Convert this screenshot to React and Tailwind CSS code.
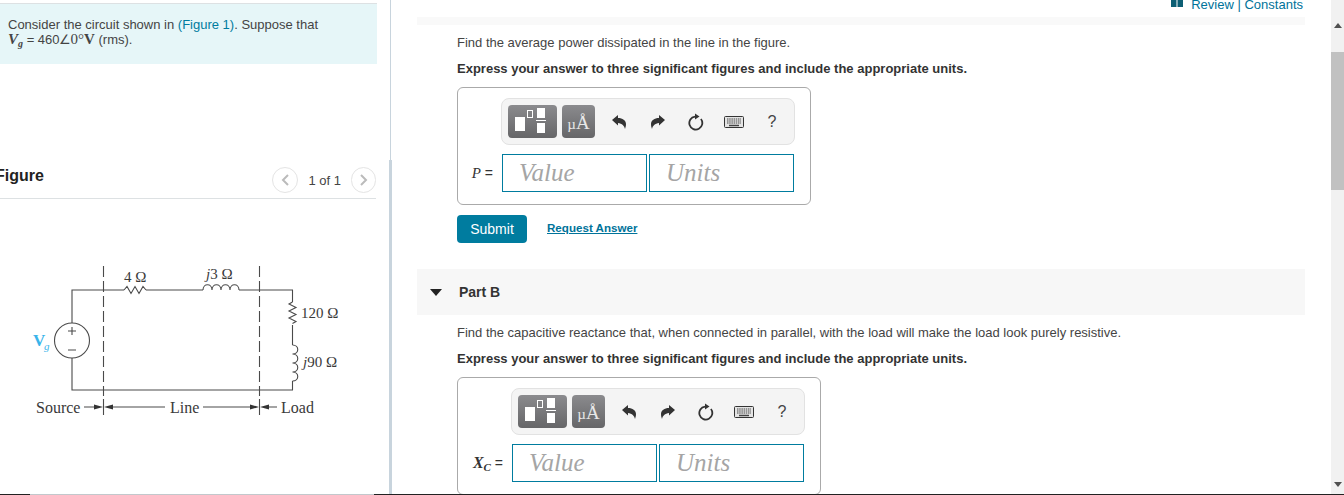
import React from "react";

const sans = { fontFamily: '"Liberation Sans", Arial, sans-serif' };
const serif = { fontFamily: '"Liberation Serif", serif' };

const UndoIcon = ({ flip }) => (
  <svg width="16" height="16" viewBox="0 0 16 16" className={flip ? "-scale-x-100" : ""}>
    <path d="M1 6 7 1v3c4.500 0 8 2.500 8 6 0 2-.5 3.500-1 5-.5-3-3-5.500-7-6v2.500z" fill="#333" />
  </svg>
);

const ResetIcon = () => (
  <svg width="18" height="18" viewBox="0 0 18 18">
    <path d="M13.900 6A6.500 6.500 0 1 1 8 3.600" fill="none" stroke="#333" strokeWidth="1.800" />
    <path d="M8 0.500 12.500 3.500 8 6.500z" fill="#333" />
  </svg>
);

const KeyboardIcon = () => (
  <svg width="20" height="12" viewBox="0 0 20 12">
    <rect x="0.500" y="0.500" width="19" height="11" rx="1" fill="#e4e4e4" stroke="#333" />
    <path d="M3 3h14M3 5h14M3 7h14" stroke="#444" strokeWidth="1" strokeDasharray="1.500 .7" />
    <path d="M5 9.500h10" stroke="#444" strokeWidth="1.500" />
  </svg>
);

const FractionIcon = () => (
  <svg width="31" height="25" viewBox="0 0 31 25">
    <rect x="0" y="9" width="10" height="14" fill="#fff" />
    <rect x="12.500" y="2.500" width="5" height="7" fill="none" stroke="#fff" strokeWidth="1" />
    <rect x="22" y="0" width="8" height="10" fill="#fff" />
    <rect x="21" y="12" width="10" height="1" fill="#fff" />
    <rect x="22" y="15" width="8" height="10" fill="#fff" />
  </svg>
);

const AnswerBox = ({ label, indent, labelWidth, width }) => (
  <div className={`border border-[#aaa] rounded-md ${width} h-[118px] pt-[10px]`}>
    <div className={`${indent} w-[294px] h-[47px] flex items-center bg-[#f4f4f4] border border-[#e2e2e2] rounded-lg pl-[6px]`}>
      <div className="w-[49px] h-[33px] flex items-start pl-[7px] pt-[3px] rounded bg-gradient-to-b from-[#8b8b8e] to-[#666668]">
        <FractionIcon />
      </div>
      <div
        className="ml-[5px] w-[33px] h-[33px] flex items-baseline justify-center pt-[6px] rounded bg-gradient-to-b from-[#8b8b8e] to-[#666668] text-[#e8e8e8] text-[15px] leading-[24px]"
        style={serif}
      >
        µ<span className="text-[19px]">Å</span>
      </div>
      <div className="ml-[14px] w-[20px] flex justify-center"><UndoIcon /></div>
      <div className="ml-[19px] w-[20px] flex justify-center"><UndoIcon flip /></div>
      <div className="ml-[18px] w-[20px] flex justify-center"><ResetIcon /></div>
      <div className="ml-[18px] w-[20px] flex justify-center"><KeyboardIcon /></div>
      <div className="ml-[18px] w-[20px] text-center text-[16px] text-[#444]">?</div>
    </div>
    <div className="flex items-center mt-[9px]">
      <div className={`${labelWidth} text-right pr-[9px] text-[#333] text-[14px] whitespace-nowrap`}>
        {label}
      </div>
      <div
        className="w-[145px] h-[38px] border border-[#007c9f] flex items-center pl-[16px] text-[25px] italic text-[#a5a5a5]"
        style={serif}
      >
        Value
      </div>
      <div
        className="ml-[2px] w-[145px] h-[38px] border border-[#007c9f] flex items-center pl-[16px] text-[25px] italic text-[#a5a5a5]"
        style={serif}
      >
        Units
      </div>
    </div>
  </div>
);

const Circuit = () => (
  <svg width="376" height="170" viewBox="0 260 376 170" className="block" style={serif}>
    <g fill="none" stroke="#4a4a4a" strokeWidth="1.100">
      <path d="M124 291H72V324M72 359V391H292.500V382M292.500 346V326M292.500 303V291H239M203 291H146" />
      <circle cx="72" cy="341.500" r="17.500" />
      <path d="M124 291l3-3.500 4 7 4-7 4 7 4-7 3 3.500" />
      <path d="M203 291c0-7 9-7 9 0c0-7 9-7 9 0c0-7 9-7 9 0c0-7 9-7 9 0" />
      <path d="M292.500 303l-3.500 2 7 3.500-7 3.500 7 3.500-7 3.500 7 3.500-3.500 2" />
      <path d="M292.500 346c7 0 7 9 0 9c7 0 7 9 0 9c7 0 7 9 0 9c7 0 7 9 0 9" />
      <path d="M103.500 267V397M259.500 267V397" strokeDasharray="11 4" />
      <path d="M103.500 400V416M259.500 400V416" />
      <path d="M84 408H96M112 408H165M203 408H252M267 408H277M68 332H76M72 328V336M68 351H76" />
    </g>
    <g fill="#333">
      <path d="M94 405.500 103 408 94 410.500zM113 405.500 104 408 113 410.500zM250 405.500 259 408 250 410.500zM269 405.500 260 408 269 410.500z" />
    </g>
    <g fill="#3a3a3a" fontSize="15">
      <text x="124" y="283">4 Ω</text>
      <text x="206" y="280"><tspan fontStyle="italic">j</tspan>3 Ω</text>
      <text x="301" y="319">120 Ω</text>
      <text x="303" y="368"><tspan fontStyle="italic">j</tspan>90 Ω</text>
    </g>
    <g fill="#3a3a3a" fontSize="16">
      <text x="36" y="414">Source</text>
      <text x="170" y="414">Line</text>
      <text x="281" y="414">Load</text>
    </g>
    <text x="33" y="347" fill="#3ab4ea" fontSize="17" fontWeight="bold">V</text>
    <text x="44" y="351" fill="#3ab4ea" fontSize="11" fontStyle="italic">g</text>
  </svg>
);

const App = () => {
  return (
    <div className="relative h-[495px] w-[1344px] overflow-hidden flex bg-white text-[#333] text-[13px]" style={sans}>
      {/* left column */}
      <div className="w-[390px] shrink-0 pt-[3px]">
        <div className="w-[377px] h-[61px] border-t border-[#dde1e3] bg-[#e6f6f8] pl-[8px] pt-[13px] leading-[15px] text-[#444]">
          <div>
            Consider the circuit shown in <span className="text-[#007c9f]">(Figure 1)</span>. Suppose that
          </div>
          <div className="whitespace-nowrap">
            <span className="italic font-bold text-[15px]" style={serif}>
              V<sub className="text-[10px]">g</sub>
            </span>{" "}
            = 460<span className="-ml-px">∠</span>
            <span className="text-[15px]" style={serif}>
              0°<b>V</b>
            </span>{" "}
            (rms).
          </div>
        </div>
        <div className="w-[376px] h-[40px] mt-[95px] border-b border-[#dde1e3] flex items-center">
          <span className="font-bold text-[16px] text-[#222] flex-1 -ml-[5px] -mt-[6px]">Figure</span>
          <div className="w-[26px] h-[26px] mt-[2px] rounded-full border border-[#e4e4e4] flex items-center justify-center mr-[10px]">
            <svg width="10" height="14" viewBox="0 0 10 14"><path d="M8 2 3 7l5 5" fill="none" stroke="#bbb" strokeWidth="2" /></svg>
          </div>
          <span className="text-[#444] mt-[4px] mr-[10px]">1 of 1</span>
          <div className="w-[25px] h-[26px] mt-[2px] rounded-full border border-[#e4e4e4] flex items-center justify-center">
            <svg width="10" height="14" viewBox="0 0 10 14"><path d="M2 2l5 5-5 5" fill="none" stroke="#bbb" strokeWidth="2" /></svg>
          </div>
        </div>
        <div className="mt-[60px]">
          <Circuit />
        </div>
      </div>

      {/* divider */}
      <div className="w-[1px] shrink-0 bg-[#c8d4dd] h-[160px]" />
      <div className="w-[3px] shrink-0 -ml-[2px] mt-[160px] bg-[#c8d4dd]" />

      {/* right column */}
      <div className="flex-1 min-w-0 pl-[25px]">
        <div className="w-[888px] h-[17px] relative">
          <div className="absolute right-[2px] -top-[5px] flex items-center text-[#00739a] whitespace-nowrap">
            <svg width="14" height="10" viewBox="0 0 14 10" className="mr-[7px] -mt-[2px]">
              <path d="M1 0h5.500v8H1zM7.500 0H13v8H7.500z" fill="#0d5f74" />
            </svg>
            Review | Constants
          </div>
        </div>
        <div className="w-[888px] h-[8px] bg-[#f9f9f9]" />
        <div className="pl-[40px]">
          <p className="mt-[10px] leading-[16px] text-[#444]">Find the average power dissipated in the line in the figure.</p>
          <p className="mt-[10px] leading-[16px] font-bold text-[#333]">Express your answer to three significant figures and include the appropriate units.</p>
          <div className="mt-[10px]">
            <AnswerBox label={<><i className="text-[15px]" style={serif}>P</i> =</>} indent="ml-[43px]" labelWidth="w-[44px]" width="w-[354px]" />
          </div>
          <div className="flex items-center mt-[10px]">
            <button className="w-[70px] h-[28px] rounded-sm bg-[#007c9f] text-white text-[14px]">Submit</button>
            <a className="ml-[20px] -mt-[2px] font-bold text-[11.6px] underline text-[#00739a]">Request Answer</a>
          </div>
        </div>
        <div className="w-[888px] h-[46px] mt-[26px] bg-[#f7f7f7] flex items-center">
          <span className="ml-[13px] w-0 h-0 border-l-[6px] border-r-[6px] border-t-[7px] border-l-transparent border-r-transparent border-t-[#222]" />
          <span className="ml-[17px] font-bold text-[14px] text-[#333]">Part B</span>
        </div>
        <div className="pl-[40px]">
          <p className="mt-[10px] leading-[16px] text-[#444]">
            Find the capacitive reactance that, when connected in parallel, with the load will make the load look purely resistive.
          </p>
          <p className="mt-[10px] leading-[16px] font-bold text-[#333]">Express your answer to three significant figures and include the appropriate units.</p>
          <div className="mt-[10px]">
            <AnswerBox
              label={<><i className="font-bold text-[16px]" style={serif}>X<sub className="text-[11px]">C</sub></i> =</>}
              indent="ml-[53px]"
              labelWidth="w-[54px]"
              width="w-[364px]"
            />
          </div>
        </div>
      </div>

      {/* scrollbar */}
      <div className="w-[13px] shrink-0 bg-[#f1f1f1] flex flex-col items-center justify-between relative">
        <span className="mt-[23px] w-0 h-0 border-l-[4px] border-r-[4px] border-b-[5px] border-l-transparent border-r-transparent border-b-[#505050]" />
        <div className="absolute top-[52px] left-0 right-0 h-[138px] bg-[#c1c1c1]" />
        <span className="mb-[8px] w-0 h-0 border-l-[4px] border-r-[4px] border-t-[5px] border-l-transparent border-r-transparent border-t-[#505050]" />
      </div>

      {/* bottom edge of the window */}
      <div className="absolute bottom-0 left-0 right-0 h-px bg-[#222]" />
      <div className="absolute bottom-0 left-[30px] w-[344px] h-px bg-[#c2c8cc]" />
    </div>
  );
};

export default App;
